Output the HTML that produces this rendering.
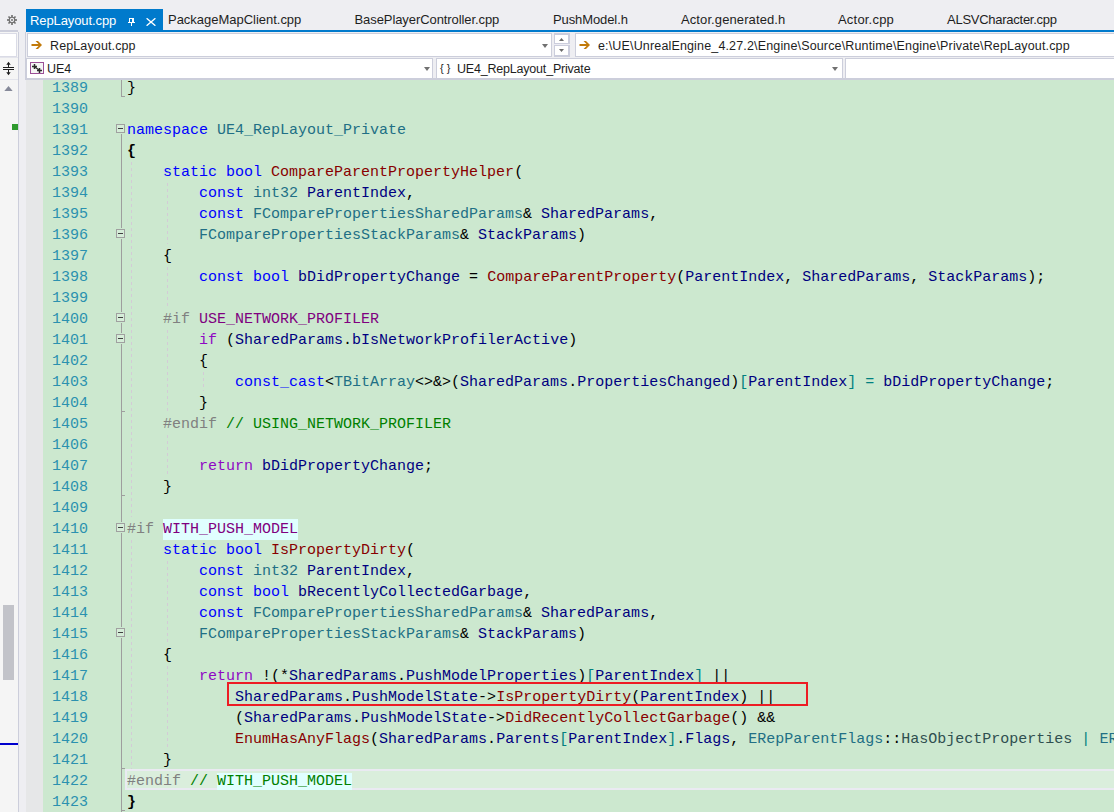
<!DOCTYPE html>
<html>
<head>
<meta charset="utf-8">
<title>RepLayout.cpp</title>
<style>
html,body{margin:0;padding:0;}
body{width:1114px;height:812px;overflow:hidden;background:#EEEEF2;position:relative;font-family:"Liberation Sans",sans-serif;}
.abs{position:absolute;}
/* tabs */
.tab{position:absolute;top:11px;height:18px;line-height:18px;font-size:13px;color:#1E1E1E;white-space:nowrap;letter-spacing:-0.1px;}
#tabA{position:absolute;left:26px;top:9px;width:137px;height:23px;background:#007ACC;}
#tabA .t{position:absolute;left:4px;top:3px;height:18px;line-height:18px;font-size:13px;color:#fff;white-space:nowrap;letter-spacing:-0.1px;}
#blue{position:absolute;left:26px;top:30px;width:1088px;height:2px;background:#007ACC;}
/* combos */
.cb{position:absolute;background:#fff;border:1px solid #CCCEDB;box-sizing:border-box;}
.cbt{position:absolute;font-size:12.5px;color:#1E1E1E;white-space:nowrap;line-height:16px;}
.dd{position:absolute;width:0;height:0;border-left:3.5px solid transparent;border-right:3.5px solid transparent;border-top:4px solid #717171;}
/* code */
#code{position:absolute;left:26px;top:80px;width:1088px;height:732px;overflow:hidden;background:#CCE8CF;}
#codein{position:absolute;left:-26px;top:-80px;width:1114px;height:812px;}
#margin{position:absolute;left:26px;top:80px;width:17px;height:732px;background:#E6E7E8;}
.ln{position:absolute;left:52px;width:36px;height:21px;line-height:21px;font-family:"Liberation Mono",monospace;font-size:15px;color:#2B91AF;white-space:pre;}
.cl{position:absolute;left:127px;height:21px;line-height:21px;font-family:"Liberation Mono",monospace;font-size:15px;color:#000;white-space:pre;}
.k{color:#0000FF}.c{color:#8F08C4}.t{color:#216F85}.f{color:#880000}.v{color:#000080}
.p{color:#808080}.m{color:#800080}.g{color:#008000}.o{color:#008080}.e{color:#2F4F4F}
.b{font-weight:bold}
.mh{color:#800080;background:#E0FFFF;display:inline-block;height:21px;}
.gh{color:#008000;background:#E0FFFF;display:inline-block;height:17px;line-height:17px;}
.fb{position:absolute;left:116px;width:9px;height:9px;box-sizing:border-box;border:1px solid #A0A0A0;background:#D5EDD8;box-shadow:0 1px 0 #CCE8CF,0 -1px 0 #CCE8CF;}
.fb i{position:absolute;left:1px;top:3px;width:5px;height:1px;background:#404040;}
.vl{position:absolute;left:121px;width:1px;background:#9E9E9E;}
.tk{position:absolute;left:121px;width:4px;height:1px;background:#9E9E9E;}
.ig{position:absolute;width:1px;background-image:linear-gradient(to bottom,#D3CBD6 0,#D3CBD6 3px,transparent 3px,transparent 6px);background-size:1px 6px;}
#cur{position:absolute;left:125px;top:769px;width:1000px;height:21px;box-sizing:border-box;border:2px solid #EAEAF2;background:#DAEEDC;}
#red{position:absolute;left:227px;top:682px;width:581px;height:24px;box-sizing:border-box;border:2px solid #ED1C24;}
</style>
</head>
<body>
<!-- left narrow panel -->
<div class="abs" style="left:0;top:30px;width:18px;height:2px;background:#CCCEDB"></div>
<div class="abs" style="left:18px;top:32px;width:1px;height:780px;background:#CCCEDB"></div>
<div class="abs" style="left:0;top:32px;width:18px;height:780px;background:#F5F5F5"></div>
<div class="abs" style="left:-1px;top:33px;width:18px;height:24px;background:#fff;border:1px solid #DADBE6;box-sizing:border-box"></div>
<div class="abs" style="left:0;top:57px;width:18px;height:1px;background:#E4E5EC"></div>
<div class="abs" style="left:0;top:79px;width:18px;height:1px;background:#E4E5EC"></div>
<!-- split icon -->
<svg class="abs" style="left:0px;top:61px" width="18" height="16" viewBox="0 0 18 16">
<rect x="3" y="6" width="11" height="1" fill="#1E1E1E"/><rect x="3" y="8" width="11" height="1" fill="#1E1E1E"/>
<rect x="8" y="2" width="1" height="4" fill="#1E1E1E"/><rect x="8" y="9" width="1" height="4" fill="#1E1E1E"/>
<path d="M8.5 0.8L10.7 3.8H6.3ZM8.5 14.2L10.7 11.2H6.3Z" fill="#1E1E1E"/>
</svg>
<!-- scroll up arrow -->
<svg class="abs" style="left:4px;top:86px" width="9" height="5" viewBox="0 0 10 6"><path d="M0 6L5 0L10 6Z" fill="#868999"/></svg>
<!-- scroll thumb -->
<div class="abs" style="left:3px;top:605px;width:11px;height:75px;background:#C2C3C9"></div>
<!-- green change marker -->
<div class="abs" style="left:12px;top:124px;width:6px;height:6px;background:#2E9A2E"></div>
<!-- blue line -->
<div class="abs" style="left:0;top:743px;width:18px;height:2px;background:#0000CD"></div>

<!-- gear -->
<svg class="abs" style="left:7px;top:15px" width="10" height="10" viewBox="0 0 12 12">
<g fill="#717171"><circle cx="6" cy="6" r="4"/><rect x="5" y="0" width="2" height="12"/><rect x="0" y="5" width="12" height="2"/>
<rect x="5" y="0" width="2" height="12" transform="rotate(45 6 6)"/><rect x="5" y="0" width="2" height="12" transform="rotate(-45 6 6)"/></g>
<circle cx="6" cy="6" r="2.6" fill="#EEEEF2"/><circle cx="6" cy="6" r="1.2" fill="#717171"/>
</svg>

<!-- tabs -->
<div id="tabA"><div class="t">RepLayout.cpp</div>
<svg class="abs" style="left:102px;top:9px" width="8" height="8" viewBox="0 0 8 8"><path d="M1 0.5H6M1.5 0.5V4.5M0 4.5H7M3.5 5V8" stroke="#fff" stroke-width="1" fill="none"/><rect x="4" y="0" width="2" height="4.5" fill="#fff"/></svg>
<svg class="abs" style="left:120px;top:9px" width="10" height="8" viewBox="0 0 10 8"><path d="M0.6 0.3L9.4 7.7M9.4 0.3L0.6 7.7" stroke="#fff" stroke-width="1.4" fill="none"/></svg>
</div>
<div id="blue"></div>
<div class="tab" style="left:168px;letter-spacing:-0.02px">PackageMapClient.cpp</div>
<div class="tab" style="left:354.5px;letter-spacing:-0.08px">BasePlayerController.cpp</div>
<div class="tab" style="left:553px">PushModel.h</div>
<div class="tab" style="left:681px;letter-spacing:0.1px">Actor.generated.h</div>
<div class="tab" style="left:838px;letter-spacing:0.2px">Actor.cpp</div>
<div class="tab" style="left:947px;letter-spacing:-0.26px">ALSVCharacter.cpp</div>

<!-- row 2 -->
<div class="abs" style="left:25px;top:32px;width:1px;height:48px;background:#CCCEDB"></div>
<div class="cb" style="left:27px;top:33px;width:525px;height:24px"></div>
<svg class="abs" style="left:31px;top:40px" width="12" height="10" viewBox="0 0 12 10"><path d="M4.5 1H7L11 5L7 9H4.5L7.5 6H0.5V4H7.5Z" fill="#C27A0A"/></svg>
<div class="cbt" style="left:50px;top:38px;letter-spacing:0.12px">RepLayout.cpp</div>
<div class="dd" style="left:542px;top:44px"></div>
<div class="abs" style="left:554px;top:33px;width:16px;height:24px;background:#CBCDDC"></div>
<div class="abs" style="left:555px;top:35px;width:13px;height:8px;background:#fff"></div>
<div class="abs" style="left:555px;top:46px;width:13px;height:9px;background:#fff"></div>
<div class="abs" style="left:552px;top:44px;width:18px;height:1px;background:#ECECF3"></div>
<svg class="abs" style="left:559px;top:38px" width="5" height="3" viewBox="0 0 5 3"><path d="M0 3L2.5 0L5 3Z" fill="#6A6A6A"/></svg>
<svg class="abs" style="left:559px;top:49px" width="5" height="3" viewBox="0 0 5 3"><path d="M0 0L2.5 3L5 0Z" fill="#6A6A6A"/></svg>
<div class="cb" style="left:575px;top:33px;width:545px;height:24px"></div>
<svg class="abs" style="left:579px;top:40px" width="12" height="10" viewBox="0 0 12 10"><path d="M4.5 1H7L11 5L7 9H4.5L7.5 6H0.5V4H7.5Z" fill="#C27A0A"/></svg>
<div class="cbt" style="left:598px;top:38px;letter-spacing:0.155px">e:\UE\UnrealEngine_4.27.2\Engine\Source\Runtime\Engine\Private\RepLayout.cpp</div>

<!-- row 3 -->
<div class="cb" style="left:26px;top:58px;width:407px;height:21px;border-color:#CCCEDB"></div>
<svg class="abs" style="left:30px;top:62px" width="14" height="12" viewBox="0 0 14 12"><rect x="0.5" y="0.5" width="13" height="11" fill="#F5F5F5" stroke="#9B4F96" stroke-width="1"/>
<path d="M2 4.5H7M4.5 2V7M7 8.5H12M9.5 6V11" stroke="#2B2B2B" stroke-width="1.5" fill="none"/><path d="M5 5L9 8" stroke="#2B2B2B" stroke-width="1.2" fill="none"/></svg>
<div class="cbt" style="left:47px;top:61px">UE4</div>
<div class="dd" style="left:424px;top:67px"></div>
<div class="cb" style="left:436px;top:58px;width:407px;height:21px"></div>
<div class="cbt" style="left:440px;top:60px;font-size:11px;letter-spacing:3px">{}</div>
<div class="cbt" style="left:457px;top:61px;letter-spacing:-0.2px">UE4_RepLayout_Private</div>
<div class="dd" style="left:832px;top:67px"></div>
<div class="cb" style="left:845px;top:58px;width:275px;height:21px"></div>

<!-- code area -->
<div class="abs" style="left:26px;top:78px;width:1088px;height:2px;background:#CCCEDB"></div>
<div id="code"><div id="codein">
<div id="cur"></div>
<div class="ig" style="left:131px;top:162px;height:355px"></div>
<div class="ig" style="left:131px;top:540px;height:229px"></div>
<div class="ig" style="left:167px;top:183px;height:61px"></div>
<div class="ig" style="left:167px;top:267px;height:40px"></div>
<div class="ig" style="left:167px;top:330px;height:82px"></div>
<div class="ig" style="left:167px;top:435px;height:40px"></div>
<div class="ig" style="left:167px;top:561px;height:82px"></div>
<div class="ig" style="left:167px;top:666px;height:82px"></div>
<div class="ig" style="left:203px;top:372px;height:19px"></div>

<div class="vl" style="top:76px;height:21px"></div>
<div class="vl" style="top:134px;height:678px"></div>
<div class="tk" style="top:96px"></div>
<div class="tk" style="top:411px"></div>
<div class="tk" style="top:495px"></div>
<div class="tk" style="top:768px"></div>
<div class="tk" style="top:810px"></div>

<div class="fb" style="top:124px"><i></i></div>
<div class="fb" style="top:229px"><i></i></div>
<div class="fb" style="top:313px"><i></i></div>
<div class="fb" style="top:334px"><i></i></div>
<div class="fb" style="top:523px"><i></i></div>
<div class="fb" style="top:628px"><i></i></div>

<div class="ln" style="top:78px">1389</div>
<div class="cl" style="top:78px">}</div>
<div class="ln" style="top:99px">1390</div>
<div class="ln" style="top:120px">1391</div>
<div class="cl" style="top:120px"><span class="k">namespace</span> <span class="t">UE4_RepLayout_Private</span></div>
<div class="ln" style="top:141px">1392</div>
<div class="cl" style="top:141px"><span class="b">{</span></div>
<div class="ln" style="top:162px">1393</div>
<div class="cl" style="top:162px">    <span class="k">static</span> <span class="k">bool</span> <span class="f">CompareParentPropertyHelper</span>(</div>
<div class="ln" style="top:183px">1394</div>
<div class="cl" style="top:183px">        <span class="k">const</span> <span class="t">int32</span> <span class="v">ParentIndex</span>,</div>
<div class="ln" style="top:204px">1395</div>
<div class="cl" style="top:204px">        <span class="k">const</span> <span class="t">FComparePropertiesSharedParams</span>&amp; <span class="v">SharedParams</span>,</div>
<div class="ln" style="top:225px">1396</div>
<div class="cl" style="top:225px">        <span class="t">FComparePropertiesStackParams</span>&amp; <span class="v">StackParams</span>)</div>
<div class="ln" style="top:246px">1397</div>
<div class="cl" style="top:246px">    {</div>
<div class="ln" style="top:267px">1398</div>
<div class="cl" style="top:267px">        <span class="k">const</span> <span class="k">bool</span> <span class="v">bDidPropertyChange</span> = <span class="f">CompareParentProperty</span>(<span class="v">ParentIndex</span>, <span class="v">SharedParams</span>, <span class="v">StackParams</span>);</div>
<div class="ln" style="top:288px">1399</div>
<div class="ln" style="top:309px">1400</div>
<div class="cl" style="top:309px">    <span class="p">#if</span> <span class="m">USE_NETWORK_PROFILER</span></div>
<div class="ln" style="top:330px">1401</div>
<div class="cl" style="top:330px">        <span class="c">if</span> (<span class="v">SharedParams</span>.<span class="v">bIsNetworkProfilerActive</span>)</div>
<div class="ln" style="top:351px">1402</div>
<div class="cl" style="top:351px">        {</div>
<div class="ln" style="top:372px">1403</div>
<div class="cl" style="top:372px">            <span class="k">const_cast</span>&lt;<span class="t">TBitArray</span>&lt;&gt;&amp;&gt;(<span class="v">SharedParams</span>.<span class="v">PropertiesChanged</span>)<span class="o">[</span><span class="v">ParentIndex</span><span class="o">]</span> <span class="o">=</span> <span class="v">bDidPropertyChange</span>;</div>
<div class="ln" style="top:393px">1404</div>
<div class="cl" style="top:393px">        }</div>
<div class="ln" style="top:414px">1405</div>
<div class="cl" style="top:414px">    <span class="p">#endif</span> <span class="g">// USING_NETWORK_PROFILER</span></div>
<div class="ln" style="top:435px">1406</div>
<div class="ln" style="top:456px">1407</div>
<div class="cl" style="top:456px">        <span class="c">return</span> <span class="v">bDidPropertyChange</span>;</div>
<div class="ln" style="top:477px">1408</div>
<div class="cl" style="top:477px">    }</div>
<div class="ln" style="top:498px">1409</div>
<div class="ln" style="top:519px">1410</div>
<div class="cl" style="top:519px"><span class="p">#if</span> <span class="mh">WITH_PUSH_MODEL</span></div>
<div class="ln" style="top:540px">1411</div>
<div class="cl" style="top:540px">    <span class="k">static</span> <span class="k">bool</span> <span class="f">IsPropertyDirty</span>(</div>
<div class="ln" style="top:561px">1412</div>
<div class="cl" style="top:561px">        <span class="k">const</span> <span class="t">int32</span> <span class="v">ParentIndex</span>,</div>
<div class="ln" style="top:582px">1413</div>
<div class="cl" style="top:582px">        <span class="k">const</span> <span class="k">bool</span> <span class="v">bRecentlyCollectedGarbage</span>,</div>
<div class="ln" style="top:603px">1414</div>
<div class="cl" style="top:603px">        <span class="k">const</span> <span class="t">FComparePropertiesSharedParams</span>&amp; <span class="v">SharedParams</span>,</div>
<div class="ln" style="top:624px">1415</div>
<div class="cl" style="top:624px">        <span class="t">FComparePropertiesStackParams</span>&amp; <span class="v">StackParams</span>)</div>
<div class="ln" style="top:645px">1416</div>
<div class="cl" style="top:645px">    {</div>
<div class="ln" style="top:666px">1417</div>
<div class="cl" style="top:666px">        <span class="c">return</span> !(*<span class="v">SharedParams</span>.<span class="v">PushModelProperties</span>)<span class="o">[</span><span class="v">ParentIndex</span><span class="o">]</span> ||</div>
<div class="ln" style="top:687px">1418</div>
<div class="cl" style="top:687px">            <span class="v">SharedParams</span>.<span class="v">PushModelState</span>-&gt;<span class="f">IsPropertyDirty</span>(<span class="v">ParentIndex</span>) ||</div>
<div class="ln" style="top:708px">1419</div>
<div class="cl" style="top:708px">            (<span class="v">SharedParams</span>.<span class="v">PushModelState</span>-&gt;<span class="f">DidRecentlyCollectGarbage</span>() &amp;&amp;</div>
<div class="ln" style="top:729px">1420</div>
<div class="cl" style="top:729px">            <span class="f">EnumHasAnyFlags</span>(<span class="v">SharedParams</span>.<span class="v">Parents</span><span class="o">[</span><span class="v">ParentIndex</span><span class="o">]</span>.<span class="v">Flags</span>, <span class="t">ERepParentFlags</span>::<span class="e">HasObjectProperties</span> <span class="o">|</span> <span class="t">ERepParentFlags</span></div>
<div class="ln" style="top:750px">1421</div>
<div class="cl" style="top:750px">    }</div>
<div class="ln" style="top:771px">1422</div>
<div class="cl" style="top:771px"><span class="p">#endif</span> <span class="g">// </span><span class="gh">WITH_PUSH_MODEL</span></div>
<div class="ln" style="top:792px">1423</div>
<div class="cl" style="top:792px"><span class="b">}</span></div>
<div id="red"></div>
</div></div>
<div id="margin"></div>
</body>
</html>
